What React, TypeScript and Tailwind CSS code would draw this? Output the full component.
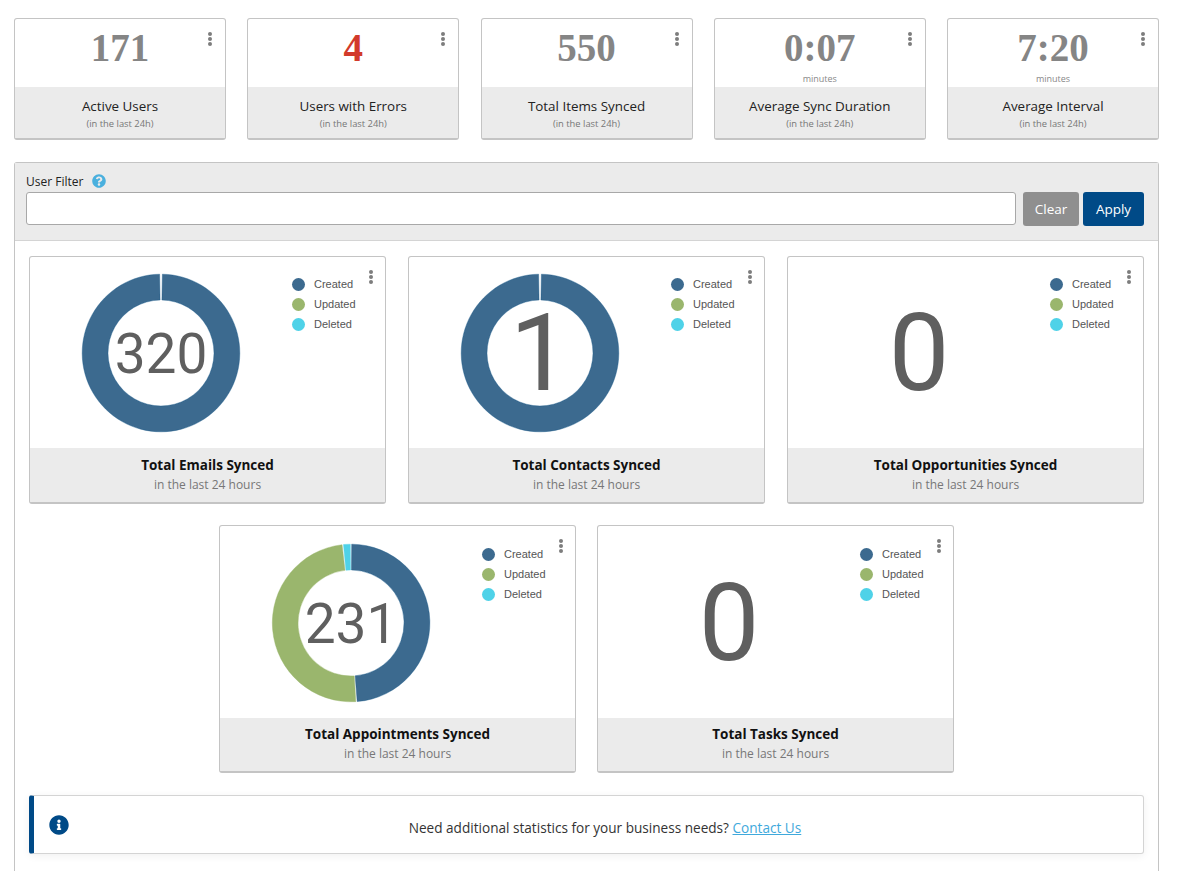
import { FaInfoCircle, FaQuestionCircle } from "react-icons/fa";

const BLUE = "#3c6a8f";
const GREEN = "#9ab66d";
const CYAN = "#4fd2e8";

type Segment = { from: number; to: number; color: string; edge: string };

const point = (r: number, deg: number) => {
  const a = ((deg - 90) * Math.PI) / 180;
  return `${(80 + r * Math.cos(a)).toFixed(2)} ${(80 + r * Math.sin(a)).toFixed(2)}`;
};

const arc = (from: number, to: number) => {
  const large = to - from > 180 ? 1 : 0;
  return `M${point(78.8, from)} A78.8 78.8 0 ${large} 1 ${point(78.8, to)} L${point(53, to)} A53 53 0 ${large} 0 ${point(53, from)} Z`;
};

const Dots = ({ className }: { className: string }) => (
  <div className={`absolute flex flex-col gap-[1px] ${className}`}>
    <span className="w-[4px] h-[4px] rounded-full bg-[#7d7d7d]" />
    <span className="w-[4px] h-[4px] rounded-full bg-[#7d7d7d]" />
    <span className="w-[4px] h-[4px] rounded-full bg-[#7d7d7d]" />
  </div>
);

const StatCard = ({
  value,
  label,
  unit,
  red,
}: {
  value: string;
  label: string;
  unit?: string;
  red?: boolean;
}) => (
  <div className="relative h-[122px] rounded-[3px] border border-[#c4c4c4] border-b-2 overflow-hidden bg-white">
    <Dots className="top-[13px] right-[13px]" />
    <div className="h-[68px] flex flex-col items-center">
      <div
        className={`mt-[10px] h-[38px] leading-[38px] text-[39px] font-bold font-['Liberation_Serif',serif] ${
          red ? "text-[#d23a2b]" : "text-[#858585]"
        }`}
      >
        {value}
      </div>
      {unit && <div className="mt-[6px] text-[9px] leading-[12px] text-[#888888]">{unit}</div>}
    </div>
    <div className="h-[52px] bg-[#ebebeb] flex flex-col items-center pt-[10px]">
      <div className="text-[13.4px] leading-[19px] text-[#222222]">{label}</div>
      <div className="mt-[1px] text-[9.4px] leading-[14px] text-[#777777]">(in the last 24h)</div>
    </div>
  </div>
);

const LegendRow = ({ color, label }: { color: string; label: string }) => (
  <div className="flex items-center gap-[9px] h-[20px]">
    <span className="w-[13px] h-[13px] rounded-full" style={{ backgroundColor: color }} />
    <span className="text-[11px] font-['Liberation_Sans',sans-serif] text-[#555555]">{label}</span>
  </div>
);

const Donut = ({ segments }: { segments: Segment[] }) => (
  <svg width="160" height="160" viewBox="0 0 160 160" className="absolute inset-0">
    {segments.map((s) => (
      <path key={s.color} d={arc(s.from, s.to)} fill={s.color} stroke={s.edge} strokeWidth="0.4" />
    ))}
  </svg>
);

const ChartCard = ({
  title,
  total,
  big,
  lower,
  segments,
}: {
  title: string;
  total: string;
  big?: boolean;
  lower?: boolean;
  segments?: Segment[];
}) => (
  <div className="relative w-[357px] h-[248px] rounded-[3px] border border-[#c4c4c4] border-b-2 overflow-hidden bg-white">
    <Dots className="top-[13px] right-[12px]" />
    <div className={`flex pl-[51px] ${lower ? "h-[192px] pt-[17px]" : "h-[191px] pt-[16px]"}`}>
      <div className="relative w-[160px] h-[160px] shrink-0">
        {segments && <Donut segments={segments} />}
        <div
          className={`absolute inset-0 flex items-center justify-center font-['Roboto',sans-serif] text-[#5f5f5f] ${
            big ? "text-[108px]" : "text-[55px] pt-[2px]"
          }`}
        >
          {total}
        </div>
      </div>
      <div className="ml-[51px] mt-[1px]">
        <LegendRow color={BLUE} label="Created" />
        <LegendRow color={GREEN} label="Updated" />
        <LegendRow color={CYAN} label="Deleted" />
      </div>
    </div>
    <div className={`bg-[#ebebeb] flex flex-col items-center ${lower ? "h-[54px] pt-[6px]" : "h-[55px] pt-[7px]"}`}>
      <div className="text-[13.5px] leading-[20px] font-bold text-[#111111]">{title}</div>
      <div className="mt-[1px] text-[12px] leading-[18px] text-[#777777]">in the last 24 hours</div>
    </div>
  </div>
);

export default function App() {
  return (
    <div className="h-[871px] overflow-hidden bg-white font-['Open_Sans',sans-serif] pl-[14px] pr-[23px] pt-[18px]">
      <div className="grid grid-cols-5 gap-x-[21.25px]">
        <StatCard value="171" label="Active Users" />
        <StatCard value="4" label="Users with Errors" red />
        <StatCard value="550" label="Total Items Synced" />
        <StatCard value="0:07" label="Average Sync Duration" unit="minutes" />
        <StatCard value="7:20" label="Average Interval" unit="minutes" />
      </div>

      <div className="mt-[22px] rounded-t-[3px] border border-[#c4c4c4] border-b-0 pb-[40px]">
        <div className="h-[78px] bg-[#ebebeb] border-b border-[#d4d4d4] pl-[11px] pr-[14px] pt-[9px]">
          <div className="flex items-center h-[19px] text-[12px] text-[#222222]">
            User Filter
            <FaQuestionCircle className="ml-[9px] -mt-[1px] text-[14px] text-[#4ab0de]" />
          </div>
          <div className="flex mt-[1px]">
            <input className="flex-1 h-[33px] rounded-[3px] border border-[#a8a8a8] bg-white" />
            <button className="ml-[7px] w-[56px] h-[34px] rounded-[3px] bg-[#8f8f8f] text-[13.5px] text-white">
              Clear
            </button>
            <button className="ml-[4px] w-[61px] h-[34px] rounded-[3px] bg-[#004a87] text-[13.5px] text-white">
              Apply
            </button>
          </div>
        </div>

        <div className="px-[14px] pt-[15px]">
          <div className="flex gap-[22px]">
            <ChartCard
              title="Total Emails Synced"
              total="320"
              segments={[{ from: 1, to: 359, color: BLUE, edge: "#1a5c8c" }]}
            />
            <ChartCard
              title="Total Contacts Synced"
              total="1"
              big
              segments={[{ from: 1, to: 359, color: BLUE, edge: "#1a5c8c" }]}
            />
            <ChartCard title="Total Opportunities Synced" total="0" big />
          </div>
          <div className="flex justify-center gap-[21px] mt-[21px]">
            <ChartCard
              title="Total Appointments Synced"
              total="231"
              lower
              segments={[
                { from: 0.5, to: 175.5, color: BLUE, edge: "#1a5c8c" },
                { from: 176.5, to: 353.5, color: GREEN, edge: GREEN },
                { from: 354.5, to: 359.5, color: CYAN, edge: CYAN },
              ]}
            />
            <ChartCard title="Total Tasks Synced" total="0" big lower />
          </div>

          <div className="mt-[22px] h-[59px] flex rounded-[3px] border border-[#d4d4d4] border-l-[5px] border-l-[#004a87] bg-white shadow-[0_2px_8px_rgba(0,0,0,0.06)]">
            <div className="w-[33px] pl-[15px] pt-[19px] shrink-0">
              <FaInfoCircle className="text-[20px] text-[#004a87]" />
            </div>
            <div className="flex-1 text-center pt-[22px] text-[13.6px] leading-[20px] text-[#333333]">
              Need additional statistics for your business needs?{" "}
              <a className="text-[#3fa9dc] underline">Contact Us</a>
            </div>
          </div>
        </div>
      </div>
    </div>
  );
}
